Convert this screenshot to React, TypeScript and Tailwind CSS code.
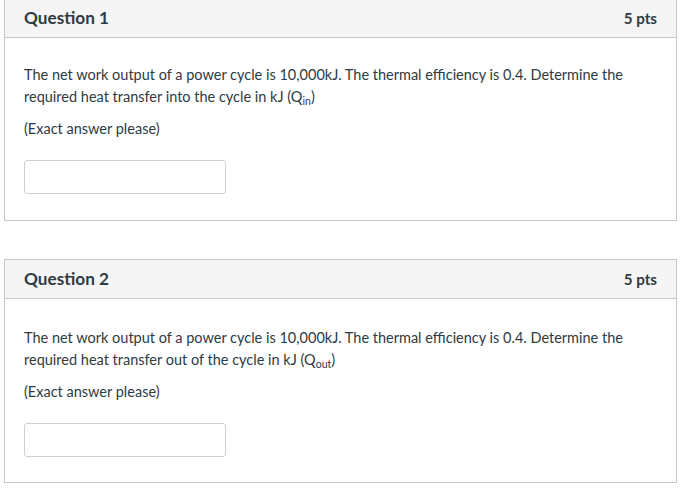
import React from "react";

function Card({ title, sub, className, bodyClass }: { title: string; sub: React.ReactNode; className?: string; bodyClass: string }) {
  return (
    <div className={"ml-[4px] w-[673px] border border-[#c7c7c7] bg-white " + (className ?? "")}>
      <div className="flex h-[39px] items-center justify-between border-b border-[#c7c7c7] bg-[#f5f5f5] pl-[19px] pr-[19px]">
        <div className="text-[17.2px] font-bold text-[#2d3b45]">{title}</div>
        <div className="text-[15.2px] font-bold text-[#2d3b45]">5 pts</div>
      </div>
      <div className={"pl-[19px] pr-[19px] text-[14.5px] leading-[22px] text-[#2d3b45] " + bodyClass}>
        <p className="whitespace-nowrap">
          The net work output of a power cycle is 10,000kJ. The thermal efficiency is 0.4. Determine the
          <br />
          {sub}
        </p>
        <p className="mt-[10px]">(Exact answer please)</p>
        <div className="mt-[20px] h-[34px] w-[202px] rounded-[3px] border border-[#d0d0d0] bg-white" />
      </div>
    </div>
  );
}

export default function App() {
  return (
    <div className="h-[491px] w-[700px] overflow-hidden bg-white" style={{ fontFamily: "Lato, 'Noto Sans', sans-serif" }}>
      <Card
        className="-mt-[2px]"
        bodyClass="h-[182px] pt-[26px]"
        title="Question 1"
        sub={
          <>
            required heat transfer into the cycle in kJ (Q<sub className="text-[10.5px] leading-none">in</sub>)
          </>
        }
      />
      <Card
        className="mt-[38px]"
        bodyClass="h-[183px] pt-[28px]"
        title="Question 2"
        sub={
          <>
            required heat transfer out of the cycle in kJ (Q<sub className="text-[10.5px] leading-none">out</sub>)
          </>
        }
      />
    </div>
  );
}
